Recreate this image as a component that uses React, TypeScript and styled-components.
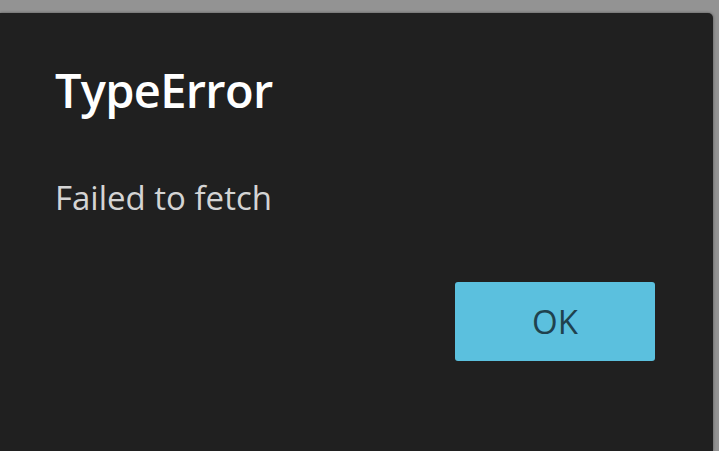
import React from "react";
import styled, { createGlobalStyle } from "styled-components";

const Global = createGlobalStyle`
  html, body { margin: 0; padding: 0; background: #939393; overflow: hidden; }
  body { font-family: "Open Sans", "Noto Sans", sans-serif; }
`;

const Backdrop = styled.div`
  width: 719px;
  height: 451px;
  padding: 13px 6px 0 0;
  box-sizing: border-box;
  display: flex;
`;

const Dialog = styled.div`
  flex: 1;
  background: #202020;
  border-radius: 0 5px 0 0;
  box-shadow: 0 0 3px rgba(0, 0, 0, 0.45);
  padding: 46px 58px 0 55px;
  display: flex;
  flex-direction: column;
`;

const Title = styled.h1`
  margin: 0;
  font-size: 47px;
  font-weight: 600;
  line-height: 62px;
  color: #ffffff;
  letter-spacing: -0.7px;
`;

const Message = styled.p`
  margin: 57px 0 0;
  font-size: 33px;
  font-weight: 400;
  line-height: 40px;
  color: #d4d4d4;
  letter-spacing: 0;
`;

const Footer = styled.div`
  display: flex;
  justify-content: flex-end;
  margin-top: 64px;
`;

const OkButton = styled.button`
  width: 200px;
  height: 79px;
  border: none;
  border-radius: 3px;
  background: #5bc0de;
  color: #1f424e;
  font-family: "Open Sans", "Noto Sans", sans-serif;
  font-size: 33px;
  font-weight: 400;
  padding: 0;
  cursor: pointer;
`;

export default function App() {
  return (
    <>
      <Global />
      <Backdrop>
        <Dialog>
          <Title>TypeError</Title>
          <Message>Failed to fetch</Message>
          <Footer>
            <OkButton>OK</OkButton>
          </Footer>
        </Dialog>
      </Backdrop>
    </>
  );
}
